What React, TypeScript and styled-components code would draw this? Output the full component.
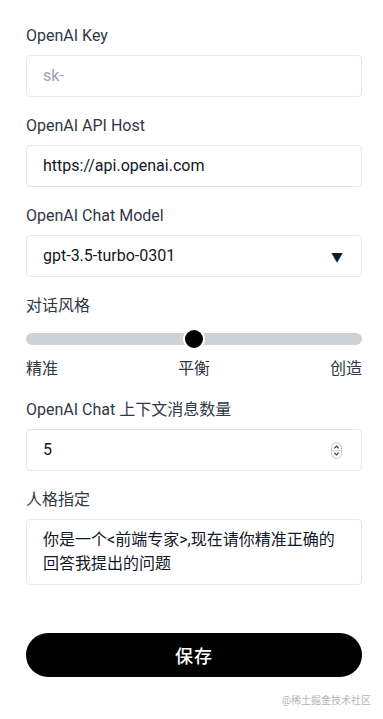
import React, { useState } from "react";
import styled, { createGlobalStyle } from "styled-components";

const GlobalStyle = createGlobalStyle`
  html, body {
    margin: 0;
    padding: 0;
    background: #ffffff;
  }
  body {
    font-family: "Roboto", "Noto Sans CJK SC", sans-serif;
    -webkit-font-smoothing: antialiased;
  }
  * {
    box-sizing: border-box;
  }
`;

const Page = styled.div`
  width: 383px;
  min-height: 719px;
  padding: 23px 21px 0 26px;
  display: flex;
  flex-direction: column;
`;

const Field = styled.div`
  display: flex;
  flex-direction: column;
  gap: 8px;
  margin-bottom: 16px;
`;

const Label = styled.label`
  font-size: 16px;
  line-height: 24px;
  color: #2f3744;
  position: relative;
  top: 1px;
`;

const Box = styled.div<{ $tall?: boolean }>`
  height: ${(p) => (p.$tall ? "66px" : "42px")};
  border: 1px solid #e5e7eb;
  border-radius: 4px;
  display: flex;
  align-items: ${(p) => (p.$tall ? "flex-start" : "center")};
  justify-content: space-between;
  padding: ${(p) => (p.$tall ? "8px 6px 8px 16px" : "0 16px")};
  background: #fff;
`;

const TextInput = styled.input`
  border: none;
  outline: none;
  width: 100%;
  font: inherit;
  font-size: 16px;
  line-height: 24px;
  color: #111827;
  padding: 0;
  background: transparent;
  &::placeholder {
    color: #9ca3af;
  }
`;

const TextArea = styled.textarea`
  border: none;
  outline: none;
  width: 100%;
  height: 48px;
  resize: none;
  font: inherit;
  font-size: 16px;
  line-height: 24px;
  color: #111827;
  padding: 0;
  background: transparent;
  overflow: hidden;
`;

const Arrow = styled.span`
  font-size: 12px;
  color: #111827;
  margin-right: 2px;
`;

const Spinner = styled.svg`
  flex-shrink: 0;
  margin-right: 3px;
`;

const Range = styled.input`
  -webkit-appearance: none;
  appearance: none;
  width: 100%;
  height: 12px;
  margin: 8px 0 0;
  border-radius: 6px;
  background: #cdd2d8;
  outline: none;
  &::-webkit-slider-thumb {
    -webkit-appearance: none;
    width: 22px;
    height: 22px;
    border-radius: 50%;
    background: #000;
    border: 2px solid #fff;
    cursor: pointer;
  }
`;

const Ticks = styled.div`
  display: flex;
  justify-content: space-between;
  font-size: 16px;
  line-height: 24px;
  color: #2f3744;
  margin-top: 8px;
`;

const SaveButton = styled.button`
  margin-top: 32px;
  height: 44px;
  width: 100%;
  border: none;
  border-radius: 9999px;
  background: #000;
  color: #fff;
  font: inherit;
  font-size: 18px;
  font-weight: 500;
  letter-spacing: 1px;
  cursor: pointer;
`;

const Watermark = styled.div`
  align-self: flex-end;
  margin-top: 17px;
  margin-right: -9px;
  font-size: 10px;
  line-height: 14px;
  color: #b4b4b4;
`;

export default function App() {
  const [key, setKey] = useState("");
  const [host, setHost] = useState("https://api.openai.com");
  const [style, setStyle] = useState(50);
  const [prompt, setPrompt] = useState(
    "你是一个<前端专家>,现在请你精准正确的\n回答我提出的问题"
  );

  return (
    <>
      <GlobalStyle />
      <Page>
        <Field>
          <Label>OpenAI Key</Label>
          <Box>
            <TextInput
              placeholder="sk-"
              value={key}
              onChange={(e) => setKey(e.target.value)}
            />
          </Box>
        </Field>
        <Field>
          <Label>OpenAI API Host</Label>
          <Box>
            <TextInput value={host} onChange={(e) => setHost(e.target.value)} />
          </Box>
        </Field>
        <Field>
          <Label>OpenAI Chat Model</Label>
          <Box>
            <TextInput value="gpt-3.5-turbo-0301" readOnly />
            <Arrow>▼</Arrow>
          </Box>
        </Field>
        <Field>
          <Label>对话风格</Label>
          <div>
            <Range
              type="range"
              min={0}
              max={100}
              value={style}
              onChange={(e) => setStyle(Number(e.target.value))}
            />
            <Ticks>
              <span>精准</span>
              <span>平衡</span>
              <span>创造</span>
            </Ticks>
          </div>
        </Field>
        <Field>
          <Label>OpenAI Chat 上下文消息数量</Label>
          <Box>
            <TextInput value="5" readOnly />
            <Spinner width="11" height="17" viewBox="0 0 11 17">
              <rect x="0.5" y="0.5" width="10" height="16" rx="5" fill="#fff" stroke="#c4c4c4" />
              <line x1="1" y1="8.5" x2="10" y2="8.5" stroke="#d4d4d4" />
              <path d="M3.3 6.3 L5.5 4 L7.7 6.3" fill="none" stroke="#333" strokeWidth="1.2" />
              <path d="M3.3 10.7 L5.5 13 L7.7 10.7" fill="none" stroke="#333" strokeWidth="1.2" />
            </Spinner>
          </Box>
        </Field>
        <Field>
          <Label>人格指定</Label>
          <Box $tall>
            <TextArea value={prompt} onChange={(e) => setPrompt(e.target.value)} />
          </Box>
        </Field>
        <SaveButton>保存</SaveButton>
        <Watermark>@稀土掘金技术社区</Watermark>
      </Page>
    </>
  );
}
